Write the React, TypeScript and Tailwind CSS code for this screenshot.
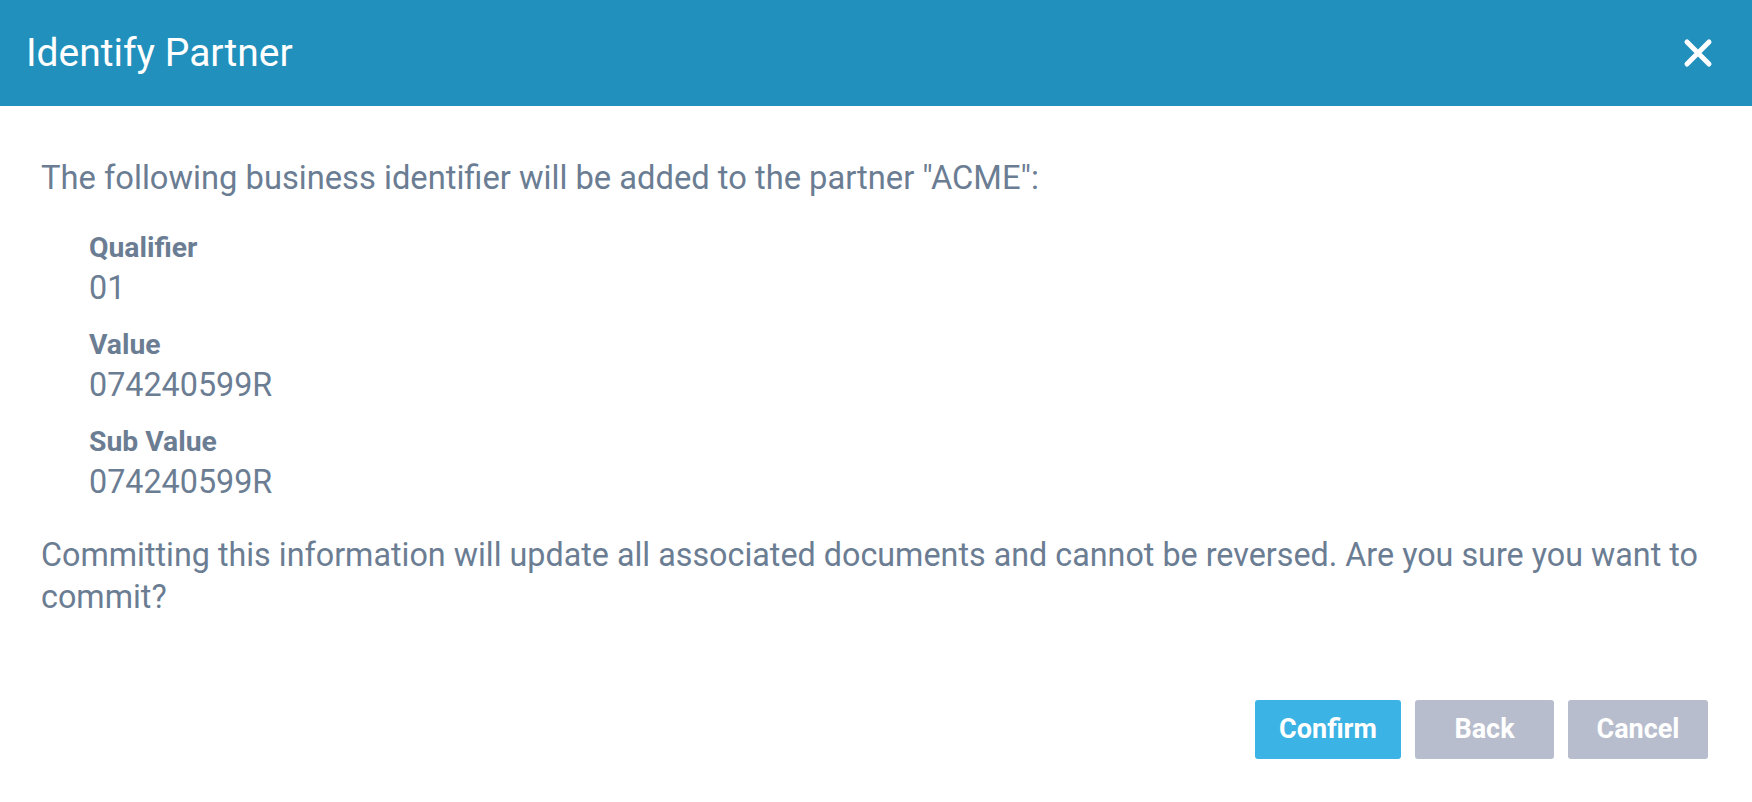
const fields = [
  { label: 'Qualifier', value: '01' },
  { label: 'Value', value: '074240599R' },
  { label: 'Sub Value', value: '074240599R' },
]

function CloseIcon() {
  return (
    <svg width="30" height="30" viewBox="0 0 30 30" fill="none">
      <path d="M4 4 L26 26 M26 4 L4 26" stroke="white" strokeWidth="5" strokeLinecap="round" />
    </svg>
  )
}

export default function App() {
  return (
    <div className="flex h-[802px] w-full flex-col bg-white font-['Roboto',sans-serif]">
      <header className="flex h-[106px] shrink-0 items-center justify-between bg-[#2190bd] pl-[26px] pr-[39px]">
        <h1 className="text-[39px] font-normal leading-none text-white">Identify Partner</h1>
        <button className="flex items-center justify-center">
          <CloseIcon />
        </button>
      </header>

      <main className="flex flex-1 flex-col pl-[41px] pr-[36px] pt-[51px] pb-[43px] text-[#6b7d93]">
        <p className="text-[32.7px] leading-[42px]">
          The following business identifier will be added to the partner "ACME":
        </p>

        <div className="mt-[30px] flex flex-col gap-[17px] pl-[48px]">
          {fields.map((f) => (
            <div key={f.label} className="flex flex-col">
              <span className="text-[28.3px] font-bold leading-[38px]">{f.label}</span>
              <span className="text-[32.3px] leading-[42px]">{f.value}</span>
            </div>
          ))}
        </div>

        <p className="mt-[31px] text-[32.3px] leading-[42px]">
          Committing this information will update all associated documents and cannot be reversed. Are you sure you want
          to commit?
        </p>

        <div className="mt-auto flex justify-end gap-[14px] pr-[8px]">
          <button className="h-[59px] w-[146px] rounded-[3px] bg-[#3bb3e4] text-[27px] font-bold text-white">
            Confirm
          </button>
          <button className="h-[59px] w-[139px] rounded-[3px] bg-[#b7bdcc] text-[27px] font-bold text-white">
            Back
          </button>
          <button className="h-[59px] w-[140px] rounded-[3px] bg-[#b7bdcc] text-[27px] font-bold text-white">
            Cancel
          </button>
        </div>
      </main>
    </div>
  )
}
